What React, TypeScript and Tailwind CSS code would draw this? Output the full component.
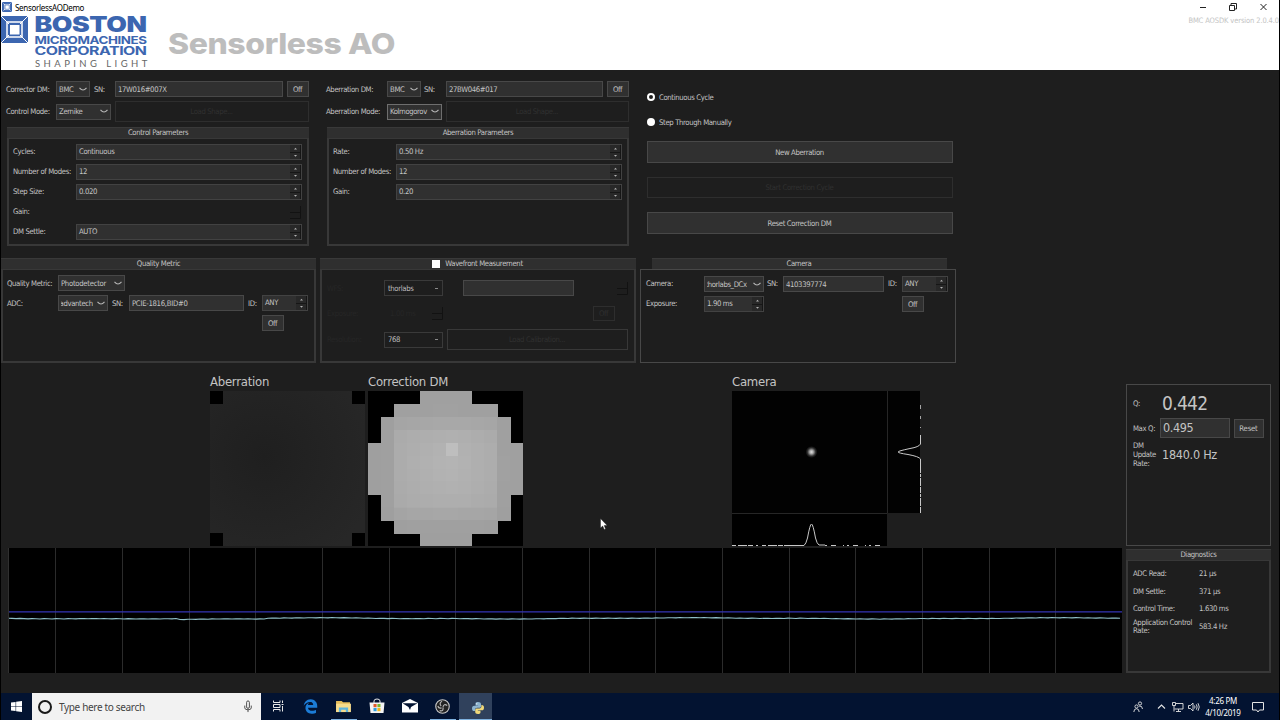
import type { ReactNode } from "react"
import clsx from "clsx"
import { FaEdgeLegacy } from "react-icons/fa6"

function Label({ children, className }: { children: ReactNode; className?: string }) {
  return <span className={clsx("shrink-0 pt-px whitespace-nowrap", className)}>{children}</span>
}

function Chevron() {
  return (
    <svg viewBox="0 0 8 5" className="h-[5px] w-[8px] shrink-0">
      <path d="M0.5 0.900 Q2.4 3 4 3 Q5.6 3 7.5 0.900" fill="none" stroke="#b5b5b5" strokeWidth="1.2" />
    </svg>
  )
}

// a scrolled select cuts into the first letter of its value
function Select({ value, className, active, scrolled }: { value: string; className?: string; active?: boolean; scrolled?: boolean }) {
  return (
    <div
      className={clsx(
        "flex h-4 shrink-0 items-center justify-between border bg-[#303030] pr-[2px] pl-[2px]",
        active ? "border-[#6e6e6e]" : "border-[#484848]",
        className
      )}
    >
      <span className={clsx("flex pt-px whitespace-nowrap", scrolled && "overflow-hidden leading-[12px]")}>
        <span className={scrolled ? "-ml-[1.5px]" : undefined}>{value}</span>
      </span>
      <Chevron />
    </div>
  )
}

function DimSelect({ value, className }: { value: string; className?: string }) {
  return (
    <div className={clsx("flex h-4 shrink-0 items-center justify-between border border-[#3a3a3a] pr-[4px] pl-[3px]", className)}>
      <span className="pt-px">{value}</span>
      <span className="h-px w-[3px] bg-[#8a8a8a]" />
    </div>
  )
}

function Field({ value, className }: { value?: string; className?: string }) {
  return (
    <div className={clsx("flex shrink-0 items-center border border-[#484848] bg-[#303030] pl-[2px]", className)}>
      <span className="pt-px whitespace-nowrap">{value}</span>
    </div>
  )
}

function Spin({ value, className }: { value: string; className?: string }) {
  return (
    <div className={clsx("flex h-4 shrink-0 items-center justify-between border border-[#424242] bg-[#303030] pl-[2px]", className)}>
      <span className="whitespace-nowrap">{value}</span>
      <svg viewBox="0 0 11 14" className="h-[14px] w-[11px] shrink-0">
        <rect width="11" height="14" fill="#282828" />
        <path d="M0 7.5H11M10.5 0V14" stroke="#161616" />
        <path d="M4 4.5L5.5 2.8L7 4.5Z M4 10L5.5 11.7L7 10Z" fill="#b0b0b0" />
      </svg>
    </div>
  )
}

// only the outline of a spinner's buttons is left when it is disabled
function DeadSpin() {
  return (
    <svg viewBox="0 0 11 15" className="h-[15px] w-[11px] shrink-0" fill="none" stroke="#121212">
      <path d="M0 7.5H10.500M0 13.500H10.500V1" />
    </svg>
  )
}

function Button({ children, className, disabled }: { children: ReactNode; className?: string; disabled?: boolean }) {
  return (
    <div
      className={clsx(
        "flex shrink-0 items-center justify-center border pr-px whitespace-nowrap",
        disabled ? "border-[#2e2e2e] text-[#303030]" : "border-[#484848] bg-[#303030]",
        className
      )}
    >
      <span className="pt-px">{children}</span>
    </div>
  )
}

function GroupHeader({ children, className }: { children: ReactNode; className?: string }) {
  return (
    <div className={clsx("flex h-[11px] shrink-0 items-center justify-center border-t border-[#393939] bg-[#2f2f2f]", className)}>
      {children}
    </div>
  )
}

function Group({ title, className, children }: { title: ReactNode; className?: string; children: ReactNode }) {
  return (
    <div className={clsx("flex shrink-0 flex-col", className)}>
      <GroupHeader>{title}</GroupHeader>
      <div className="grow border-2 border-t border-[#383838]">{children}</div>
    </div>
  )
}

function ParamRow({ label, value }: { label: string; value?: string }) {
  return (
    <div className="flex h-4 items-center">
      <span className="w-[63px] shrink-0 whitespace-nowrap">{label}</span>
      {value ? <Spin value={value} className="w-[226px]" /> : <div className="flex w-[225px] justify-end"><DeadSpin /></div>}
    </div>
  )
}

const controlParams = [
  { label: "Cycles:", value: "Continuous" },
  { label: "Number of Modes:", value: "12" },
  { label: "Step Size:", value: "0.020" },
  { label: "Gain:" },
  { label: "DM Settle:", value: "AUTO" },
]

const aberrationParams = [
  { label: "Rate:", value: "0.50 Hz" },
  { label: "Number of Modes:", value: "12" },
  { label: "Gain:", value: "0.20" },
]

const diagnostics = [
  ["ADC Read:", "21 µs"],
  ["DM Settle:", "371 µs"],
  ["Control Time:", "1.630 ms"],
]

function LogoMark({ className }: { className?: string }) {
  return (
    <svg viewBox="0 0 27 27" className={className}>
      <rect width="27" height="27" fill="#3c66b0" />
      <path d="M0 0L8 8M27 0L19 8M27 27L19 19M0 27L8 19" stroke="#fff" strokeWidth="1" />
      <rect x="6" y="6" width="15" height="15" fill="none" stroke="#fff" strokeWidth="1.500" />
      <rect x="9" y="9" width="9.500" height="9.500" fill="#fff" />
    </svg>
  )
}

function Header() {
  return (
    <header className="flex h-[70px] shrink-0 flex-col bg-white text-black">
      <div className="flex h-[14px] shrink-0 items-center">
        <LogoMark className="ml-px h-[10px] w-[10px]" />
        <span className="ml-[3px] pt-px font-['Noto_Sans',sans-serif] text-[8px] tracking-[-0.3px]">SensorlessAODemo</span>
        <svg viewBox="0 0 70 12" className="mr-[9px] ml-auto h-[12px] w-[70px]" fill="none" stroke="#222" strokeWidth="1">
          <path d="M0 6.500H6M60.5 3L66.500 9M66.5 3L60.5 9" />
          <path d="M29.500 4.500H34.500V9.5H29.500ZM31 4.500V2.500H36.500V8H34.500" />
        </svg>
      </div>
      <div className="flex h-[56px]">
        <LogoMark className="mt-[2px] h-[27px] w-[27px]" />
        <svg viewBox="0 0 380 56" className="ml-[6px] h-[56px] w-[380px] overflow-visible">
          <g fill="#3c66b0" fontFamily="Inter, sans-serif" fontWeight="800">
            <text x="0.500" y="18" fontSize="21.500" fontWeight="900" textLength="112" lengthAdjust="spacingAndGlyphs">BOSTON</text>
            <text x="0.500" y="29.500" fontSize="11" fontWeight="700" textLength="112" lengthAdjust="spacingAndGlyphs">MICROMACHINES</text>
            <text x="0.500" y="41" fontSize="11.500" fontWeight="700" textLength="112" lengthAdjust="spacingAndGlyphs">CORPORATION</text>
          </g>
          <text x="1" y="53" fontSize="9.500" textLength="112" fill="#666" fontFamily="Lato, sans-serif">SHAPING LIGHT</text>
          <text x="134" y="40" fontSize="29" textLength="227" lengthAdjust="spacingAndGlyphs" fill="#bdbdbd" fontFamily="Inter, sans-serif" fontWeight="800">Sensorless AO</text>
        </svg>
        <span className="mt-[3px] ml-auto text-[7.5px] whitespace-nowrap text-[#c4c4c4] tracking-[-0.12px]">BMC AOSDK version 2.0.4.0</span>
      </div>
    </header>
  )
}

function CorrectorColumn() {
  return (
    <div className="w-[302px]">
      <div className="flex h-4 items-center">
        <Label className="-ml-px w-[50px]">Corrector DM:</Label>
        <Select value="BMC" className="w-[34px]" />
        <Label className="ml-[4px] w-[21px]">SN:</Label>
        <Field value="17W016#007X" className="h-4 w-[168px]" />
        <Button className="ml-auto h-4 w-[22px]">Off</Button>
      </div>
      <div className="mt-1 flex h-[21px] items-center">
        <Label className="-ml-px w-[50px] pt-[2px]">Control Mode:</Label>
        <Select value="Zernike" className="w-[55px]" />
        <Button disabled className="ml-auto h-[21px] w-[194px]">Load Shape...</Button>
      </div>
      <Group title="Control Parameters" className="mt-[5px] h-[119px]">
        <div className="mt-[5px] ml-[4px] flex flex-col gap-1">
          {controlParams.map((p) => <ParamRow key={p.label} {...p} />)}
        </div>
      </Group>
    </div>
  )
}

function AberrationColumn() {
  return (
    <div className="ml-[18px] w-[302px]">
      <div className="flex h-4 items-center">
        <Label className="-ml-px w-[61px]">Aberration DM:</Label>
        <Select value="BMC" className="w-[34px]" />
        <Label className="ml-[3px] w-[22px]">SN:</Label>
        <Field value="27BW046#017" className="h-4 w-[157px]" />
        <Button className="ml-auto h-4 w-[22px]">Off</Button>
      </div>
      <div className="mt-1 flex h-[21px] items-center">
        <Label className="-ml-px w-[61px] pt-[2px]">Aberration Mode:</Label>
        <Select value="Kolmogorov" active className="w-[55px] tracking-[-0.4px]" />
        <Button disabled className="ml-auto h-[21px] w-[183px]">Load Shape...</Button>
      </div>
      <Group title="Aberration Parameters" className="mt-[5px] h-[119px]">
        <div className="mt-[5px] ml-[4px] flex flex-col gap-1">
          {aberrationParams.map((p) => <ParamRow key={p.label} {...p} />)}
        </div>
      </Group>
    </div>
  )
}

function CycleColumn() {
  return (
    <div className="ml-[18px] w-[306px]">
      <div className="mt-[11px] flex h-[10px] items-center gap-[4px]">
        <span className="h-2 w-2 rounded-full border-2 border-white bg-[#1e1e1e]" />
        <Label>Continuous Cycle</Label>
      </div>
      <div className="mt-[15px] flex h-[10px] items-center gap-[4px]">
        <span className="h-2 w-2 rounded-full bg-white" />
        <Label>Step Through Manually</Label>
      </div>
      <div className="mt-[14px] flex flex-col gap-[14px]">
        <Button className="h-[22px]">New Aberration</Button>
        <Button disabled className="h-[21px]">Start Correction Cycle</Button>
        <Button className="h-[22px]">Reset Correction DM</Button>
      </div>
    </div>
  )
}

function QualityMetric() {
  return (
    <Group title="Quality Metric" className="h-[105px] w-[315px]">
      <div className="ml-[4px] flex flex-col gap-1 pt-[5px]">
        <div className="flex h-4 items-center">
          <Label className="w-[51px]">Quality Metric:</Label>
          <Select value="Photodetector" className="w-[67px] tracking-[-0.3px]" />
        </div>
        <div className="flex h-4 items-center">
          <Label className="w-[51px]">ADC:</Label>
          <Select value="advantech" scrolled className="w-[50px]" />
          <Label className="ml-[4px] w-[17px]">SN:</Label>
          <Field value="PCIE-1816,BID#0" className="h-4 w-[115px] tracking-[-0.3px]" />
          <Label className="ml-[4px] w-[14px]">ID:</Label>
          <Spin value="ANY" className="w-[46px]" />
        </div>
        <Button className="ml-[255px] h-4 w-[22px]">Off</Button>
      </div>
    </Group>
  )
}

function Wavefront() {
  const title = (
    <span className="flex items-center gap-[5px] pr-px">
      <span className="h-2 w-2 bg-white" />
      Wavefront Measurement
    </span>
  )
  return (
    <Group title={title} className="h-[105px] w-[316px]">
      <div className="flex flex-col pr-[6px] pl-[5px] pt-[10px] text-[#262626]">
        <div className="flex h-4 items-center">
          <Label className="w-[57px]">WFS:</Label>
          <DimSelect value="thorlabs" className="w-[59px] text-[#bcbcbc]" />
          <Field className="ml-[20px] h-4 w-[111px]" />
          <div className="ml-auto"><DeadSpin /></div>
        </div>
        <div className="mt-[9px] flex h-4 items-center">
          <Label className="w-[63px]">Exposure:</Label>
          <Label className="w-[42px]">1.00 ms</Label>
          <DeadSpin />
          <Button disabled className="mr-[13px] ml-auto h-[15px] w-[22px]">Off</Button>
        </div>
        <div className="mt-[8px] flex h-[21px] items-center">
          <Label className="w-[57px]">Resolution:</Label>
          <DimSelect value="768" className="w-[59px] text-[#bcbcbc]" />
          <Button disabled className="ml-auto h-[21px] w-[181px] border-[#383838]">Load Calibration...</Button>
        </div>
      </div>
    </Group>
  )
}

function CameraSettings() {
  return (
    <div className="flex h-[105px] w-[316px] shrink-0 flex-col">
      <GroupHeader className="mr-[9px] ml-[12px] h-[10px] pr-px">Camera</GroupHeader>
      <div className="grow border border-[#484848]">
        <div className="flex flex-col gap-1 pt-[6px] pl-[5px]">
          <div className="flex h-4 items-center">
            <span className="w-[58px]">Camera:</span>
            <Select value="thorlabs_DCx" scrolled className="w-[60px] tracking-[-0.4px]" />
            <span className="ml-[3px] w-[16px]">SN:</span>
            <Field value="4103397774" className="h-4 w-[101px]" />
            <span className="ml-[4px] w-[14px]">ID:</span>
            <Spin value="ANY" className="w-[46px]" />
          </div>
          <div className="flex h-4 items-center">
            <span className="w-[58px]">Exposure:</span>
            <Spin value="1.90 ms" className="w-[60px]" />
            <Button className="ml-[138px] h-4 w-[22px]">Off</Button>
          </div>
        </div>
      </div>
    </div>
  )
}

function AberrationMap() {
  return (
    <svg viewBox="0 0 155 155" className="h-[155px] w-[155px]">
      <defs>
        <radialGradient id="dip" cx="0.35" cy="0.42" r="0.75">
          <stop offset="0" stopColor="#1f1f1f" />
          <stop offset="1" stopColor="#272727" />
        </radialGradient>
      </defs>
      <rect width="155" height="155" fill="url(#dip)" />
      <path d="M0 0h13v13H0zM142 0h13v13h-13zM0 142h13v13H0zM142 142h13v13h-13z" fill="#000" />
    </svg>
  )
}

// first active actuator of each mirror row, rows are symmetric
const inset = [4, 2, 1, 1, 0, 0, 0, 0, 1, 1, 2, 4]

function shade(col: number, row: number) {
  if (col === 6 && row === 4) return 190
  const d = Math.hypot(col - 5.7, row - 5.2)
  const inner = col > 1 && col < 10 && row > 1 && row < 10
  return Math.round((inner ? 181 : 164) - d * (inner ? 2.4 : 0.8))
}

function CorrectionMap() {
  const cell = 155 / 12
  return (
    <svg viewBox="0 0 155 155" className="h-[155px] w-[155px]" shapeRendering="crispEdges">
      <rect width="155" height="155" fill="#000" />
      {inset.map((start, row) =>
        Array.from({ length: 12 - start * 2 }, (_, i) => {
          const col = start + i
          const v = shade(col, row)
          return <rect key={`${row}-${col}`} x={col * cell} y={row * cell} width={cell + 0.5} height={cell + 0.5} fill={`rgb(${v},${v},${v})`} />
        })
      )}
      <path d="M26 26H129V39H26ZM26 117H129V129H26Z" fill="#000" fillOpacity="0.025" />
    </svg>
  )
}

function CameraView() {
  return (
    <svg viewBox="0 0 190 155" className="h-[155px] w-[190px]">
      <defs>
        <radialGradient id="spot">
          <stop offset="0" stopColor="#e0e0e0" />
          <stop offset="0.3" stopColor="#a8a8a8" />
          <stop offset="0.7" stopColor="#2c2c2c" />
          <stop offset="1" stopColor="#020202" />
        </radialGradient>
      </defs>
      <rect width="188" height="122" fill="#020202" />
      <rect y="122" width="155" height="33" fill="#000" />
      <path d="M155.500 0V122M0 122.500H155" stroke="#262626" />
      <circle cx="79.500" cy="61" r="6" fill="url(#spot)" />
      <g fill="none" stroke="#c8c8c8">
        <path d="M188.500 14V18M188.500 25V28M188.500 36V37" strokeWidth="0.8" />
        <path d="M188.500 44V53Q187 56 178 57.500Q166 60 166 61Q166 62 176 63.500Q187 65.500 188.500 68V76" strokeWidth="1" />
        <path d="M188.500 76V122" strokeDasharray="6 1 3 1 8 1" />
        <path d="M0 154.500H70" strokeDasharray="4 2 9 1 5 3 2 4" />
        <path d="M52 154.500H72Q74 153 75.500 147Q78 133 79.500 133Q81 133 83.500 147Q85 153 87 154H93" />
        <path d="M93 154.500H155" strokeDasharray="2 4 5 7 1 3" />
      </g>
    </svg>
  )
}

const gridLines = [55, 122, 189, 255, 322, 389, 455, 522, 589, 655, 722, 789, 855, 922, 989, 1055]

const trace = Array.from({ length: 279 }, (_, i) => {
  const x = i * 4
  const drift = Math.sin(x / 62) * 0.5 + Math.sin(x / 19) * 0.2
  const dip = x > 170 && x < 260 ? 0.9 : 0
  return `${x},${(70.2 + drift + dip + (i % 3) * 0.15).toFixed(2)}`
}).join(" ")

function QualityChart() {
  return (
    <svg viewBox="0 0 1114 125" className="ml-[7px] h-[125px] w-[1114px] shrink-0">
      <rect width="1114" height="125" fill="#000" />
      {gridLines.map((x) => (
        <path key={x} d={`M${x - 7.5} 0V125`} stroke="#2b2b2b" />
      ))}
      <path d="M0 63.800H1114" stroke="#3434b4" strokeWidth="1.300" />
      <polyline points={trace} fill="none" stroke="#8fc0c8" strokeWidth="1.100" />
      <path d="M0.500 0V125" stroke="#303030" />
    </svg>
  )
}

function Titled({ title, className, children }: { title: string; className?: string; children: ReactNode }) {
  return (
    <div className={clsx("shrink-0", className)}>
      <div className="flex h-[18px] items-center pb-[2px] text-[13px] tracking-[-0.25px] whitespace-nowrap">{title}</div>
      {children}
    </div>
  )
}

function Readouts() {
  return (
    <aside className="mt-[21px] flex w-[145px] shrink-0 flex-col">
      <div className="h-[162px] shrink-0 border border-[#484848] pt-[6px] pl-[6px]">
        <div className="flex h-6 items-center">
          <Label className="w-[29px]">Q:</Label>
          <span className="text-[19px] tracking-[-0.7px]">0.442</span>
        </div>
        <div className="mt-[3px] flex h-5 items-center">
          <Label className="w-[27px]">Max Q:</Label>
          <Field value="0.495" className="h-5 w-[70px] text-[12.5px]" />
          <Button className="ml-[4px] h-[19px] w-[30px] tracking-[-0.2px]">Reset</Button>
        </div>
        <div className="mt-[4px] flex h-[27px] items-center">
          <span className="w-[29px] leading-[8.7px]">DM Update Rate:</span>
          <span className="text-[12.5px] tracking-[-0.25px] whitespace-nowrap">1840.0 Hz</span>
        </div>
      </div>
      <Group title="Diagnostics" className="mt-[3px] h-[124px]">
        <div className="flex flex-col pt-[4px] pl-[5px]">
          {diagnostics.map(([name, value]) => (
            <div key={name} className="flex h-[17.3px] items-center">
              <Label className="w-[66px]">{name}</Label>
              <Label>{value}</Label>
            </div>
          ))}
          <div className="flex h-[20px] items-center">
            <span className="w-[66px] pt-px leading-[8.7px]">Application Control Rate:</span>
            <Label className="-mt-[2px]">583.4 Hz</Label>
          </div>
        </div>
      </Group>
    </aside>
  )
}

function PythonIcon() {
  return (
    <svg viewBox="0 0 16 16" className="mt-[4px] ml-[4px] h-[12px] w-[12px]">
      <path d="M8 0C4.500 0 4.700 1.500 4.700 3v1.500h3.500V5H3C1 5 0 6.500 0 8.500S1 12 3 12h1.200v-2C4.200 8.500 5.300 7.500 7 7.500h3.500c1 0 1.500-.7 1.500-1.700V3C12 1 10.500 0 8 0Z" fill="#8db4cf" />
      <path d="M8 16c3.500 0 3.300-1.500 3.300-3v-1.500H7.800V11H13c2 0 3-1.500 3-3.500S15 4 13 4h-.5v2c0 1.500-1 2.500-2.500 2.500H6.500C5.200 8.500 4.300 9.300 4.300 10.500V13c0 2 1.200 3 3.700 3Z" fill="#f0d878" />
      <circle cx="6.300" cy="2.400" r="0.800" fill="#fff" />
    </svg>
  )
}

function TaskSlot({ children, open, active }: { children: ReactNode; open?: boolean; active?: boolean }) {
  return (
    <div className={clsx("flex h-[27px] w-[33px] flex-col items-center", active && "bg-[#30415c]")}>
      <div className="flex h-[26px] items-center justify-center">{children}</div>
      {(open || active) && <div className={clsx("h-px bg-[#7fb2e0]", active ? "w-full" : "w-[26px]")} />}
    </div>
  )
}

function Taskbar() {
  return (
    <footer className="flex h-[27px] shrink-0 items-center bg-[#031331] font-['Noto_Sans',sans-serif] text-white">
      <div className="flex w-[31px] justify-center pr-px">
        <svg viewBox="0 0 12 12" className="h-[11px] w-[11px]" fill="#fff">
          <path d="M0 1.700L5 1V5.600H0ZM5.600 0.900L12 0V5.600H5.600ZM0 6.300H5V11L0 10.300ZM5.600 6.300H12V12L5.600 11.100Z" />
        </svg>
      </div>
      <div className="flex h-[27px] w-[229px] items-center bg-[#f2f2f2] pl-[6px] text-[#444]">
        <span className="h-[14px] w-[14px] rounded-full border-2 border-[#1a1a1a]" />
        <span className="ml-[7px] text-[10px] tracking-[-0.33px]">Type here to search</span>
        <svg viewBox="0 0 10 14" className="mr-[8px] ml-auto h-[13px] w-[10px]" fill="none" stroke="#444">
          <rect x="3.500" y="1" width="3" height="8" rx="1.500" />
          <path d="M1.500 6V8.500Q1.500 10.500 5 10.500Q8.500 10.500 8.500 8.500V6M5 10.500V13" />
        </svg>
      </div>
      <TaskSlot>
        <svg viewBox="0 0 12 12" className="h-[12px] w-[12px]" fill="none" stroke="#e8e8e8">
          <path d="M1.500 0.500V2.500H8V0.500M1.500 11.500V9.500H8V11.500M1.500 4.500H8V7.500H1.500ZM10.500 0.500V3M10.500 6V11.500M9.500 4.500H11.500" />
        </svg>
      </TaskSlot>
      <TaskSlot><FaEdgeLegacy className="h-[15px] w-[15px] text-[#1c7cd6]" /></TaskSlot>
      <TaskSlot open>
        <svg viewBox="0 0 16 14" className="h-[13px] w-[15px]">
          <path d="M0 1H6L7.500 2.500H15V13H0Z" fill="#e6bd5a" />
          <path d="M0 4H16V13H0Z" fill="#f7dc8c" />
          <path d="M3 13V8H13V13H10.500V10.500H5.500V13Z" fill="#5fb4dc" />
        </svg>
      </TaskSlot>
      <TaskSlot>
        <svg viewBox="0 0 16 16" className="h-[16px] w-[16px]">
          <path d="M5 5V3Q5 1 8 1Q11 1 11 3V5" fill="none" stroke="#e8e8e8" />
          <path d="M0.500 4.500H15.500L14.500 15H1.500Z" fill="#f4f4f4" />
          <path d="M4.500 6H7.600V9.200H4.500Z" fill="#e2592c" />
          <path d="M8.400 6H11.500V9.200H8.400Z" fill="#7cb82f" />
          <path d="M4.500 10H7.600V13.200H4.500Z" fill="#2fa0dc" />
          <path d="M8.400 10H11.500V13.200H8.400Z" fill="#f2b61c" />
        </svg>
      </TaskSlot>
      <TaskSlot>
        <svg viewBox="0 0 16 14" className="h-[14px] w-[16px]">
          <path d="M0 4L8 0L16 4V13.500H0Z" fill="#fff" />
          <path d="M0.500 4.300H15.500L9 8L8 11L6.500 8Z" fill="#031331" />
        </svg>
      </TaskSlot>
      <TaskSlot open>
        <svg viewBox="0 0 16 16" className="h-[15px] w-[15px]" fill="none">
          <circle cx="8" cy="8" r="7.200" fill="#222" stroke="#c8c8c8" strokeWidth="1.200" />
          <path d="M7.500 2.500Q4 4.500 6.500 7.500M13 7Q9.500 4.500 8.500 8.500M5 12.500Q9.500 13.500 8.500 9M3 7.500Q4 10.500 7 9.500" stroke="#b4b4b4" strokeWidth="1.300" />
        </svg>
      </TaskSlot>
      <TaskSlot active><PythonIcon /></TaskSlot>
      <svg viewBox="0 0 68 14" className="mr-[4px] ml-auto h-[14px] w-[68px]" fill="none" stroke="#e4e4e4" strokeWidth="0.900">
        <circle cx="3.500" cy="6.500" r="1.600" />
        <path d="M0.800 12Q1 8.700 3.500 8.700Q6 8.700 6.200 12" />
        <circle cx="7" cy="3.500" r="1.600" />
        <path d="M6 6Q9.300 5.500 9.500 9" />
        <path d="M25 8.500L28.500 5L32 8.500" strokeWidth="1.100" />
        <path d="M43 3.500H50V9H41.500M45.500 9V11.500M43 11.500H48M39.500 2.500H42.500V5.500H39.500ZM41 5.500V11.500" />
        <path d="M55.500 5.500H57.500L60 3V11L57.500 8.500H55.500ZM61.500 5.500Q62.500 7 61.500 8.500M63.300 4.300Q65 7 63.300 9.700M65 3.200Q67.500 7 65 10.800" />
      </svg>
      <div className="mr-[11px] flex w-[36px] flex-col items-center text-[8px] leading-[12px] tracking-[-0.3px] whitespace-nowrap">
        <span>4:26 PM</span>
        <span>4/10/2019</span>
      </div>
      <svg viewBox="0 0 12 12" className="mr-[15px] h-[12px] w-[12px]" fill="none" stroke="#e4e4e4">
        <path d="M0.500 1.500H11.500V9H7.500L6 11L4.500 9H0.500Z" />
      </svg>
    </footer>
  )
}

export default function App() {
  return (
    <div className="relative flex h-[720px] w-[1280px] flex-col overflow-hidden border-x border-black bg-[#1e1e1e] font-['DejaVu_Sans_Condensed','DejaVu_Sans',sans-serif] text-[7.7px] leading-none tracking-[-0.36px] text-[#c4c4c4] [font-stretch:condensed]">
      <Header />
      <section className="flex h-[188px] shrink-0 pt-[11px] pl-[6px]">
        <CorrectorColumn />
        <AberrationColumn />
        <CycleColumn />
      </section>
      <section className="flex h-[105px] shrink-0 gap-1">
        <QualityMetric />
        <Wavefront />
        <CameraSettings />
      </section>
      <section className="flex h-[330px] shrink-0">
        <div className="flex w-[1125px] shrink-0 flex-col">
          <div className="flex h-[185px] shrink-0 pt-[10px] pl-[209px]">
            <Titled title="Aberration" className="w-[155px]"><AberrationMap /></Titled>
            <Titled title="Correction DM" className="ml-[3px] w-[155px]"><CorrectionMap /></Titled>
            <Titled title="Camera" className="ml-[209px] w-[190px]"><CameraView /></Titled>
          </div>
          <QualityChart />
        </div>
        <Readouts />
      </section>
      <Taskbar />
      {/* mouse pointer */}
      <svg viewBox="0 0 8 12" className="absolute top-[518px] left-[599px] h-[12px] w-[8px]">
        <path d="M0.500 0.500V10L2.700 8L4.200 11.500L5.600 10.900L4.200 7.500H7.200Z" fill="#fff" stroke="#111" strokeWidth="0.400" />
      </svg>
    </div>
  )
}
